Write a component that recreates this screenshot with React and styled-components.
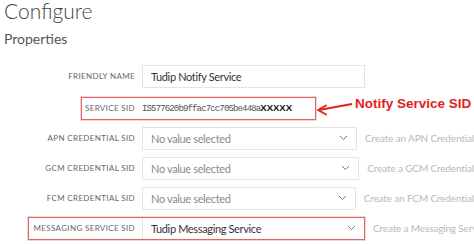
import styled, { createGlobalStyle } from 'styled-components';

const Global = createGlobalStyle`
  html, body {
    margin: 0;
    background: #fff;
  }
  body {
    font-family: Lato, "Open Sans", sans-serif;
    overflow: hidden;
  }
`;

const Page = styled.div`
  width: 474px;
  height: 244px;
  overflow: hidden;
`;

const Title = styled.h1`
  margin: 0 0 0 4px;
  font-size: 21px;
  font-weight: 300;
  line-height: 21px;
  color: #444;
`;

const Subtitle = styled.h2`
  margin: 10px 0 0 4px;
  font-size: 14px;
  font-weight: 400;
  line-height: 1.2;
  color: #555;
`;

const Form = styled.div`
  margin-top: 17px;
  display: flex;
  flex-direction: column;
  gap: 7px;
`;

const Row = styled.div`
  display: flex;
  align-items: center;
  height: 23px;
  margin-top: ${p => p.$mt || 0}px;
  white-space: nowrap;
`;

const Frame = styled.div`
  display: flex;
  align-items: stretch;
  height: 100%;
  margin-left: ${p => p.$left}px;
  width: ${p => p.$width}px;
  border: 1px solid #e36464;
  box-shadow: 0 0 0 1px rgba(232, 110, 110, 0.3);
  box-sizing: border-box;
`;

const Label = styled.div`
  width: ${p => p.$width || 142}px;
  flex: none;
  align-self: center;
  text-align: right;
  font-size: 8px;
  letter-spacing: 0.35px;
  text-transform: uppercase;
  color: #666;
  padding-right: 7px;
  box-sizing: border-box;
`;

const Field = styled.div`
  display: flex;
  align-items: center;
  justify-content: space-between;
  width: ${p => (p.$framed ? '222px' : '223px')};
  height: 100%;
  box-sizing: border-box;
  padding: 0 8px;
  border: 1px solid #e4e4e4;
  ${p => p.$framed && 'border-top: none; border-right: none; border-bottom: none;'}
  font-size: 11px;
  letter-spacing: -0.35px;
  color: ${p => (p.$placeholder ? '#8a8a8a' : '#333')};
`;

const SidValue = styled.div`
  flex: 1;
  align-self: center;
  display: flex;
  align-items: baseline;
`;

const Mono = styled.span`
  font-family: "Liberation Mono", monospace;
  font-size: 9px;
  letter-spacing: -0.85px;
  color: #555;
`;

const Masked = styled.span`
  font-family: "Liberation Sans", Arial, sans-serif;
  font-weight: 700;
  font-size: 9.5px;
  color: #111;
`;

const Helper = styled.div`
  margin-left: 8px;
  font-size: 10px;
  letter-spacing: -0.15px;
  color: #b9b9b9;
`;

const Note = styled.div`
  display: flex;
  align-items: center;
`;

const NoteText = styled.span`
  margin: -10px 0 0 1px;
  font-family: "Liberation Sans", Arial, sans-serif;
  font-weight: 700;
  font-size: 13.5px;
  color: #e3221c;
`;

const Chevron = () => (
  <svg width="9" height="6" viewBox="0 0 9 6">
    <path d="M1 1 L4.5 4.5 L8 1" fill="none" stroke="#777" strokeWidth="1" />
  </svg>
);

const Arrow = () => (
  <svg width="38" height="16" viewBox="0 0 38 16">
    <path d="M3 10 L36 4" stroke="#e3221c" strokeWidth="2" fill="none" />
    <path d="M10 5.5 L2 10 L10 14.5" stroke="#e3221c" strokeWidth="2" fill="none" strokeLinecap="round" strokeLinejoin="round" />
  </svg>
);

const selects = [
  { label: 'APN Credential SID', helper: 'Create an APN Credential' },
  { label: 'GCM Credential SID', helper: 'Create a GCM Credential' },
  { label: 'FCM Credential SID', helper: 'Create an FCM Credential' },
];

export default function App() {
  return (
    <Page>
      <Global />
      <Title>Configure</Title>
      <Subtitle>Properties</Subtitle>
      <Form>
        <Row>
          <Label>Friendly Name</Label>
          <Field>Tudip Notify Service</Field>
        </Row>
        <Row $mt={2}>
          <Frame $left={81} $width={235}>
            <Label $width={60}>Service SID</Label>
            <SidValue>
              <Mono>IS577620b9ffac7cc705be448a</Mono>
              <Masked>XXXXX</Masked>
            </SidValue>
          </Frame>
          <Note>
            <Arrow />
            <NoteText>Notify Service SID</NoteText>
          </Note>
        </Row>
        {selects.map(s => (
          <Row key={s.label}>
            <Label>{s.label}</Label>
            <Field $placeholder>
              No value selected
              <Chevron />
            </Field>
            <Helper>{s.helper}</Helper>
          </Row>
        ))}
        <Row>
          <Frame $left={28} $width={338}>
            <Label $width={113}>Messaging Service SID</Label>
            <Field $framed>
              Tudip Messaging Service
              <Chevron />
            </Field>
          </Frame>
          <Helper>Create a Messaging Service</Helper>
        </Row>
      </Form>
    </Page>
  );
}
